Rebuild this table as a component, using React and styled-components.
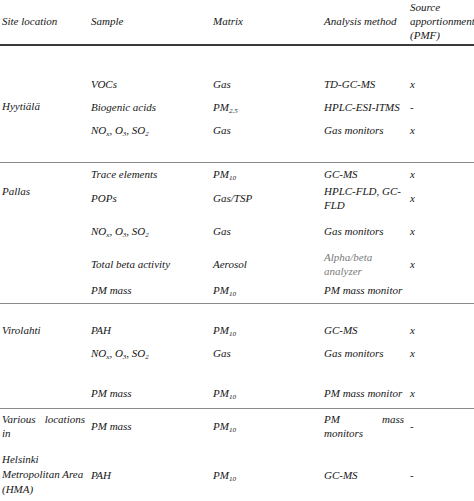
import React from "react";
import styled, { createGlobalStyle } from "styled-components";

const Global = createGlobalStyle`
  html, body { margin: 0; padding: 0; background: #ffffff; }
  body {
    font-family: "Liberation Serif", "Times New Roman", serif;
    font-style: italic;
    font-size: 11px;
    color: #161616;
    overflow: hidden;
  }
`;

const COLS = "88px 122px 111px 86px 1fr";

const Table = styled.div`
  width: 474px;
  display: flex;
  flex-direction: column;
`;

const HeaderRow = styled.div`
  display: grid;
  grid-template-columns: ${COLS};
  height: 46px;
  border-bottom: 2px solid #3a3a3a;
  box-sizing: border-box;
`;

const HeadCell = styled.div`
  padding-left: ${(p) => (p.$first ? "2px" : "3px")};
  display: flex;
  flex-direction: column;
  justify-content: ${(p) => (p.$top ? "flex-start" : "center")};
  padding-bottom: ${(p) => (p.$top ? "0px" : "2px")};
  line-height: 14px;
  white-space: nowrap;
  overflow: hidden;
`;

const Section = styled.div`
  display: flex;
  border-top: ${(p) => (p.$first ? "none" : "1.5px solid #8a8a8a")};
  min-height: ${(p) => p.$h}px;
  box-sizing: border-box;
`;

const SiteCell = styled.div`
  width: 88px;
  flex: none;
  box-sizing: border-box;
  padding: ${(p) => p.$pt}px 3px 0 2px;
  line-height: 14px;
`;

const SitePara = styled.div`
  margin-top: ${(p) => p.$mt || 0}px;
  line-height: ${(p) => p.$lh || 14}px;
`;

const Justify = styled.div`
  display: flex;
  justify-content: space-between;
`;

const Rows = styled.div`
  flex: 1;
  display: flex;
  flex-direction: column;
  padding-top: ${(p) => p.$pt || 0}px;
`;

const Row = styled.div`
  display: grid;
  grid-template-columns: 122px 111px 86px 1fr;
  height: ${(p) => p.$h}px;
  margin-top: ${(p) => p.$mt || 0}px;
  align-items: center;
  line-height: 14px;
`;

const Cell = styled.div`
  padding-left: 3px;
  padding-right: 3px;
  color: ${(p) => (p.$muted ? "#7a7a7a" : "inherit")};
`;

const Sub = styled.sub`
  font-size: 7px;
  vertical-align: -2px;
  line-height: 0;
`;

const NOx = () => (
  <>
    NO<Sub>x</Sub>, O<Sub>3</Sub>, SO<Sub>2</Sub>
  </>
);
const PM10 = () => (
  <>
    PM<Sub>10</Sub>
  </>
);

export default function App() {
  return (
    <>
      <Global />
      <Table>
        <HeaderRow>
          <HeadCell $first>Site location</HeadCell>
          <HeadCell>Sample</HeadCell>
          <HeadCell>Matrix</HeadCell>
          <HeadCell>Analysis method</HeadCell>
          <HeadCell $top>
            <span>Source</span>
            <span>apportionment</span>
            <span>(PMF)</span>
          </HeadCell>
        </HeaderRow>

        <Section $first $h={116}>
          <SiteCell $pt={53}>Hyytiälä</SiteCell>
          <Rows $pt={26}>
            <Row $h={23}>
              <Cell>VOCs</Cell>
              <Cell>Gas</Cell>
              <Cell>TD-GC-MS</Cell>
              <Cell>x</Cell>
            </Row>
            <Row $h={23}>
              <Cell>Biogenic acids</Cell>
              <Cell>
                PM<Sub>2.5</Sub>
              </Cell>
              <Cell>HPLC-ESI-ITMS</Cell>
              <Cell>-</Cell>
            </Row>
            <Row $h={23}>
              <Cell>
                <NOx />
              </Cell>
              <Cell>Gas</Cell>
              <Cell>Gas monitors</Cell>
              <Cell>x</Cell>
            </Row>
          </Rows>
        </Section>

        <Section $h={141}>
          <SiteCell $pt={21}>Pallas</SiteCell>
          <Rows>
            <Row $h={21}>
              <Cell>Trace elements</Cell>
              <Cell>
                <PM10 />
              </Cell>
              <Cell>GC-MS</Cell>
              <Cell>x</Cell>
            </Row>
            <Row $h={28}>
              <Cell>POPs</Cell>
              <Cell>Gas/TSP</Cell>
              <Cell>HPLC-FLD, GC-FLD</Cell>
              <Cell>x</Cell>
            </Row>
            <Row $h={38}>
              <Cell>
                <NOx />
              </Cell>
              <Cell>Gas</Cell>
              <Cell>Gas monitors</Cell>
              <Cell>x</Cell>
            </Row>
            <Row $h={26}>
              <Cell>Total beta activity</Cell>
              <Cell>Aerosol</Cell>
              <Cell $muted>Alpha/beta analyzer</Cell>
              <Cell>x</Cell>
            </Row>
            <Row $h={27}>
              <Cell>PM mass</Cell>
              <Cell>
                <PM10 />
              </Cell>
              <Cell>PM mass monitor</Cell>
              <Cell />
            </Row>
          </Rows>
        </Section>

        <Section $h={105}>
          <SiteCell $pt={19}>Virolahti</SiteCell>
          <Rows $pt={14}>
            <Row $h={24}>
              <Cell>PAH</Cell>
              <Cell>
                <PM10 />
              </Cell>
              <Cell>GC-MS</Cell>
              <Cell>x</Cell>
            </Row>
            <Row $h={22}>
              <Cell>
                <NOx />
              </Cell>
              <Cell>Gas</Cell>
              <Cell>Gas monitors</Cell>
              <Cell>x</Cell>
            </Row>
            <Row $h={26} $mt={16}>
              <Cell>PM mass</Cell>
              <Cell>
                <PM10 />
              </Cell>
              <Cell>PM mass monitor</Cell>
              <Cell>x</Cell>
            </Row>
          </Rows>
        </Section>

        <Section $h={92}>
          <SiteCell $pt={3}>
            <SitePara>
              <Justify>
                <span>Various</span>
                <span>locations</span>
              </Justify>
              <div>in</div>
            </SitePara>
            <SitePara $mt={12} $lh={15}>
              <div>Helsinki</div>
              <div>Metropolitan Area</div>
              <div>(HMA)</div>
            </SitePara>
          </SiteCell>
          <Rows>
            <Row $h={34}>
              <Cell>PM mass</Cell>
              <Cell>
                <PM10 />
              </Cell>
              <Cell>
                <Justify>
                  <span>PM</span>
                  <span>mass</span>
                </Justify>
                <div>monitors</div>
              </Cell>
              <Cell>-</Cell>
            </Row>
            <Row $h={30} $mt={17}>
              <Cell>PAH</Cell>
              <Cell>
                <PM10 />
              </Cell>
              <Cell>GC-MS</Cell>
              <Cell>-</Cell>
            </Row>
          </Rows>
        </Section>
      </Table>
    </>
  );
}
